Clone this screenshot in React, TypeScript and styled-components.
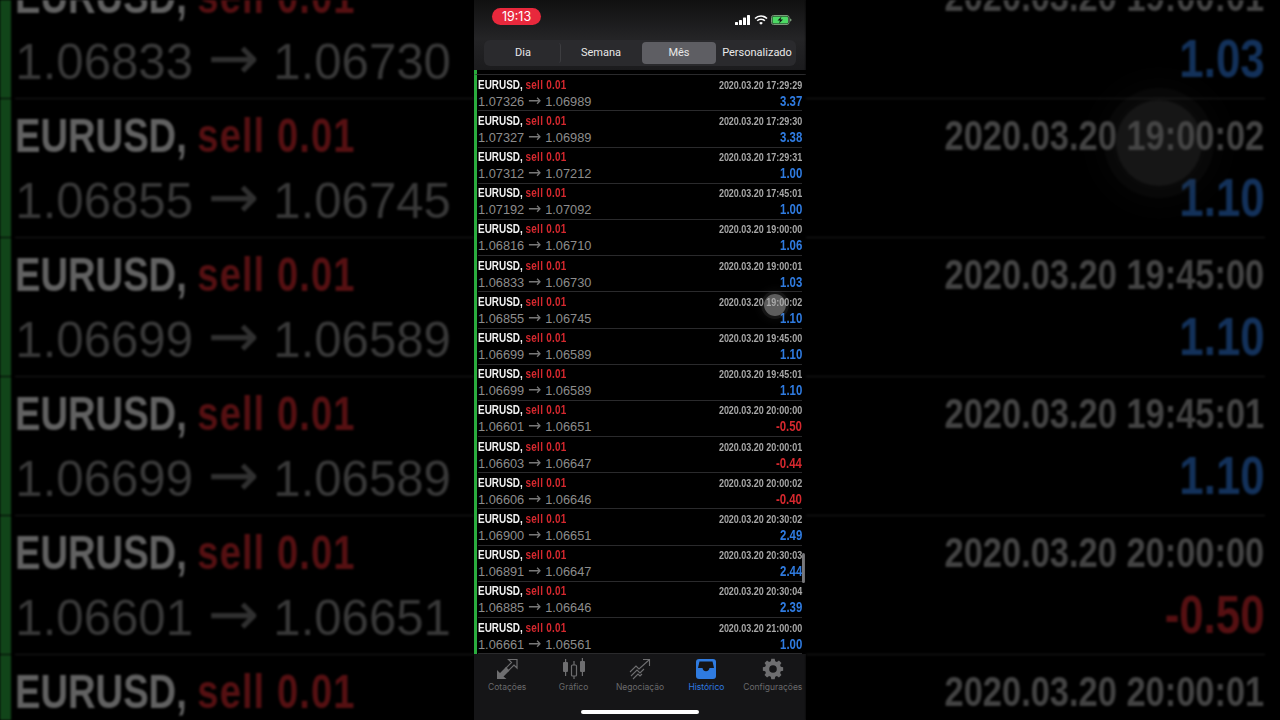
import styled, { createGlobalStyle } from 'styled-components';

interface Trade {
  open: string;
  close: string;
  time: string;
  profit: string;
}

const trades: Trade[] = [
  { open: '1.07326', close: '1.06989', time: '17:29:29', profit: '3.37' },
  { open: '1.07327', close: '1.06989', time: '17:29:30', profit: '3.38' },
  { open: '1.07312', close: '1.07212', time: '17:29:31', profit: '1.00' },
  { open: '1.07192', close: '1.07092', time: '17:45:01', profit: '1.00' },
  { open: '1.06816', close: '1.06710', time: '19:00:00', profit: '1.06' },
  { open: '1.06833', close: '1.06730', time: '19:00:01', profit: '1.03' },
  { open: '1.06855', close: '1.06745', time: '19:00:02', profit: '1.10' },
  { open: '1.06699', close: '1.06589', time: '19:45:00', profit: '1.10' },
  { open: '1.06699', close: '1.06589', time: '19:45:01', profit: '1.10' },
  { open: '1.06601', close: '1.06651', time: '20:00:00', profit: '-0.50' },
  { open: '1.06603', close: '1.06647', time: '20:00:01', profit: '-0.44' },
  { open: '1.06606', close: '1.06646', time: '20:00:02', profit: '-0.40' },
  { open: '1.06900', close: '1.06651', time: '20:30:02', profit: '2.49' },
  { open: '1.06891', close: '1.06647', time: '20:30:03', profit: '2.44' },
  { open: '1.06885', close: '1.06646', time: '20:30:04', profit: '2.39' },
  { open: '1.06661', close: '1.06561', time: '21:00:00', profit: '1.00' },
];

const GlobalStyle = createGlobalStyle`
  html, body {
    margin: 0;
    background: #000;
  }
`;

const Page = styled.div`
  width: 1280px;
  height: 720px;
  display: grid;
  grid-template-columns: 474px 332px 474px;
  overflow: hidden;
  background: #000;
  font-family: "Liberation Sans", Arial, sans-serif;
`;

const Backdrop = styled.div<{ $side: 'left' | 'right' }>`
  position: relative;
  height: 720px;
  overflow: hidden;
  display: flex;
  justify-content: ${(props) => (props.$side === 'left' ? 'flex-start' : 'flex-end')};
  filter: brightness(0.4) blur(0.9px);
`;

const Magnified = styled.div`
  zoom: 3.84;
  flex: 0 0 332px;
  width: 332px;
  margin-top: -10.3px;
`;

const Phone = styled.div`
  position: relative;
  height: 720px;
  display: flex;
  flex-direction: column;
  background: #000;
`;

const Header = styled.div`
  height: 70px;
  flex: none;
  box-sizing: border-box;
  padding: 8px 10px 0 10px;
  background: linear-gradient(#101010, #242426 55%, #1b1b1d);
`;

const StatusBar = styled.div`
  display: flex;
  align-items: center;
  justify-content: space-between;
  height: 17px;
  padding: 0 4px 0 8px;
`;

const Clock = styled.div`
  width: 49px;
  height: 17px;
  border-radius: 9px;
  background: #e8283c;
  color: #fff;
  font: 400 12.5px/17px Inter, sans-serif;
  text-align: center;
`;

const StatusIcons = styled.div`
  display: flex;
  align-items: center;
  gap: 3px;
  margin-top: 6px;
`;

const Segments = styled.div`
  margin-top: 15px;
  height: 26px;
  box-sizing: border-box;
  padding: 2px 0;
  display: grid;
  grid-template-columns: repeat(4, 1fr);
  background: #2a2a2d;
  border-radius: 6px;
`;

const Segment = styled.div<{ $selected?: boolean; $divider?: boolean }>`
  margin: 0 2px;
  border-radius: 4px;
  background: ${(props) => (props.$selected ? '#5e5e63' : 'transparent')};
  box-shadow: ${(props) => (props.$divider ? '2px 0 0 -1px #3d3d40' : 'none')};
  color: #e8e8e8;
  font: 400 11px/22px Roboto, sans-serif;
  text-align: center;
  white-space: nowrap;
`;

const ListFrame = styled.div`
  flex: 1;
  background: #000;
`;

const ListTop = styled.div`
  height: 5.2px;
  box-sizing: border-box;
  border-left: 3px solid #2aac3e;
  border-bottom: 1px solid #2a2a2c;
`;

const Row = styled.div`
  height: 36.1875px;
  box-sizing: border-box;
  display: flex;
  background: #000;
`;

const GreenBar = styled.div`
  flex: 0 0 2.8px;
  box-sizing: border-box;
  background: #2aac3e;
  ${Magnified} & {
    border-bottom: 0.3px solid #000;
  }
`;

const RowBody = styled.div`
  flex: 1;
  margin-left: 1.2px;
  margin-right: 4px;
  padding-top: 1.5px;
  box-sizing: border-box;
  border-bottom: 1px solid #2a2a2c;
  ${Magnified} & {
    border-bottom: 0.3px solid #444;
  }
`;

const Line = styled.div`
  display: flex;
  align-items: center;
  justify-content: space-between;
  height: 16px;
  white-space: nowrap;
`;

// no condensed face installed, so the bold labels are narrowed by hand
const Title = styled.div`
  font-weight: 700;
  font-size: 12.5px;
  color: #f2f2f2;
  transform: scaleX(0.795);
  transform-origin: left center;
`;

const Side = styled.span`
  color: #d5282e;
  letter-spacing: 0.35px;
`;

const Time = styled.div`
  font-weight: 700;
  font-size: 11px;
  color: #a8a8a8;
  transform: scaleX(0.815);
  transform-origin: right center;
`;

const Prices = styled.div`
  font-size: 12.8px;
  color: #8c8c8c;
`;

const Arrow = styled.span`
  font-family: "DejaVu Sans", sans-serif;
  font-size: 16px;
  line-height: 1;
  margin: 0 0.2px;
  opacity: 0.85;
`;

const Profit = styled.div<{ $loss: boolean }>`
  font-weight: 700;
  font-size: 14px;
  color: ${(props) => (props.$loss ? '#d5282e' : '#2f7be0')};
  transform: scaleX(0.815);
  transform-origin: right center;
`;

const TabBar = styled.div`
  flex: none;
  height: 65.8px;
  box-sizing: border-box;
  background: #151517;
  display: grid;
  grid-template-columns: repeat(5, 1fr);
  padding: 4px 0 0;
  position: relative;
`;

const Tab = styled.div<{ $active?: boolean }>`
  display: flex;
  flex-direction: column;
  align-items: center;
  color: ${(props) => (props.$active ? '#2f7be0' : '#6a6a6c')};
  font: 400 8.5px/11px Inter, sans-serif;
  white-space: nowrap;
  svg {
    display: block;
    margin-bottom: 1.5px;
  }
`;

const HomeIndicator = styled.div`
  position: absolute;
  left: 107px;
  bottom: 6px;
  width: 118px;
  height: 4px;
  border-radius: 2px;
  background: #fff;
`;

const Touch = styled.div<{ $big?: boolean }>`
  position: absolute;
  left: ${(props) => (props.$big ? '353px' : '301px')};
  top: ${(props) => (props.$big ? '143px' : '305px')};
  width: ${(props) => (props.$big ? '86px' : '22px')};
  height: ${(props) => (props.$big ? '86px' : '22px')};
  transform: translate(-50%, -50%);
  border-radius: 50%;
  background: rgba(170, 170, 170, ${(props) => (props.$big ? 0.32 : 0.55)});
  box-shadow: 0 0 0 ${(props) => (props.$big ? '12px' : '3px')} rgba(150, 150, 150, 0.1),
    0 0 ${(props) => (props.$big ? '40px 16px' : '10px 4px')} rgba(150, 150, 150, 0.08);
`;

const ScrollThumb = styled.div`
  position: absolute;
  right: 1px;
  top: 553px;
  width: 3px;
  height: 30px;
  border-radius: 2px;
  background: #77777a;
`;

const TradeRow = ({ trade }: { trade: Trade }) => (
  <Row>
    <GreenBar />
    <RowBody>
      <Line>
        <Title>EURUSD, <Side>sell 0.01</Side></Title>
        <Time>2020.03.20 {trade.time}</Time>
      </Line>
      <Line>
        <Prices>{trade.open} <Arrow>→</Arrow> {trade.close}</Prices>
        <Profit $loss={trade.profit.startsWith('-')}>{trade.profit}</Profit>
      </Line>
    </RowBody>
  </Row>
);

const QuotesIcon = () => (
  <svg width="24" height="22" viewBox="0 0 24 22">
    <path d="M13.500 1.500h8.500v8.500l-3-3-6 6-2.500-2.500 6-6z" fill="none" stroke="#6e6e70" strokeWidth="1.2" />
    <path d="M2 21v-9l3 3 6-6 3.500 3.500-6 6 3 2.500z" fill="#6e6e70" />
  </svg>
);

const ChartIcon = () => (
  <svg width="24" height="22" viewBox="0 0 24 22" fill="#6e6e70">
    <rect x="3" y="1" width="1.2" height="17" />
    <rect x="1" y="4" width="5" height="10" rx="1" />
    <rect x="11.400" y="3" width="1.2" height="18" />
    <rect x="9.500" y="7" width="5" height="11" rx="1" fill="#151517" stroke="#6e6e70" strokeWidth="1.2" />
    <rect x="19.800" y="0" width="1.2" height="18" />
    <rect x="18" y="3" width="5" height="11" rx="1" />
  </svg>
);

const TradeIcon = () => (
  <svg width="24" height="22" viewBox="0 0 24 22" fill="none" stroke="#6e6e70" strokeWidth="1.1">
    <path d="M2 14l6-6 3 3 10-9" />
    <path d="M15 1.500h6.500v6.500" />
    <path d="M3 18l6-6 3 3 4-4" />
    <path d="M5 21l5-5 2 2 2-2" />
  </svg>
);

const HistoryIcon = () => (
  <svg width="24" height="22" viewBox="0 0 24 22">
    <path
      d="M5 1h14a3 3 0 0 1 3 3v14a3 3 0 0 1-3 3H5a3 3 0 0 1-3-3V4a3 3 0 0 1 3-3z"
      fill="#2f7be0"
    />
    <path d="M5.500 3.500h13l1.500 6.500h-4.500c-.5 2.200-1.700 3.300-3.500 3.300s-3-1.100-3.500-3.300H4z" fill="#151517" />
  </svg>
);

const SettingsIcon = () => (
  <svg width="24" height="22" viewBox="-1 -1 26 26">
    <path
      fillRule="evenodd"
      fill="#6e6e70"
      d="M10 0h4l.6 2.800 2 .8L19 2l3 3-1.600 2.400.8 2 2.800.6v4l-2.800.6-.8 2L22 19l-3 3-2.400-1.600-2 .8L14 24h-4l-.6-2.800-2-.8L5 22l-3-3 1.600-2.400-.8-2L0 14v-4l2.800-.6.8-2L2 5l3-3 2.400 1.600 2-.8zM12 7.500a4.500 4.500 0 1 0 0 9 4.500 4.500 0 0 0 0-9z"
    />
  </svg>
);

const SignalIcon = () => (
  <svg width="16" height="10" viewBox="0 0 16 10" fill="#fff">
    <rect x="0" y="7" width="3" height="3" rx="0.6" />
    <rect x="4" y="5" width="3" height="5" rx="0.6" />
    <rect x="8" y="2.500" width="3" height="7.500" rx="0.6" />
    <rect x="12" y="0" width="3" height="10" rx="0.6" />
  </svg>
);

const WifiIcon = () => (
  <svg width="14" height="10" viewBox="0 0 14 10" fill="none" stroke="#fff" strokeWidth="1.6">
    <path d="M1 3.500a8.500 8.500 0 0 1 12 0" />
    <path d="M3.200 5.800a5.300 5.300 0 0 1 7.600 0" />
    <path d="M7 9.800L5.200 7.900a2.500 2.500 0 0 1 3.600 0z" fill="#fff" stroke="none" />
  </svg>
);

const BatteryIcon = () => (
  <svg width="21" height="10" viewBox="0 0 21 10">
    <rect x="0.500" y="0.500" width="17.500" height="9" rx="2" fill="none" stroke="#7a9a7a" />
    <rect x="1.500" y="1.500" width="15.500" height="7" rx="1" fill="#4cd964" />
    <path d="M19 3.500c1 .3 1.500.8 1.500 1.500s-.5 1.200-1.500 1.500z" fill="#7a9a7a" />
    <path d="M10.500 1.500L6.500 5.500h2.500l-1 3 4-4h-2.500z" fill="#111" />
  </svg>
);

const Ledger = ({ rows }: { rows: Trade[] }) => (
  <>
    {rows.map((trade) => <TradeRow key={trade.time} trade={trade} />)}
  </>
);

export default function App() {
  const zoomed = trades.slice(5, 11);
  return (
    <Page>
      <GlobalStyle />
      <Backdrop $side="left">
        <Magnified><Ledger rows={zoomed} /></Magnified>
      </Backdrop>
      <Phone>
        <Header>
          <StatusBar>
            <Clock>19:13</Clock>
            <StatusIcons>
              <SignalIcon />
              <WifiIcon />
              <BatteryIcon />
            </StatusIcons>
          </StatusBar>
          <Segments>
            <Segment $divider>Dia</Segment>
            <Segment>Semana</Segment>
            <Segment $selected>Mês</Segment>
            <Segment>Personalizado</Segment>
          </Segments>
        </Header>
        <ListFrame>
          <ListTop />
          <Ledger rows={trades} />
        </ListFrame>
        <TabBar>
          <Tab><QuotesIcon />Cotações</Tab>
          <Tab><ChartIcon />Gráfico</Tab>
          <Tab><TradeIcon />Negociação</Tab>
          <Tab $active><HistoryIcon />Histórico</Tab>
          <Tab><SettingsIcon />Configurações</Tab>
          <HomeIndicator />
        </TabBar>
        <Touch />
        <ScrollThumb />
      </Phone>
      <Backdrop $side="right">
        <Magnified><Ledger rows={zoomed} /></Magnified>
        <Touch $big />
      </Backdrop>
    </Page>
  );
}
